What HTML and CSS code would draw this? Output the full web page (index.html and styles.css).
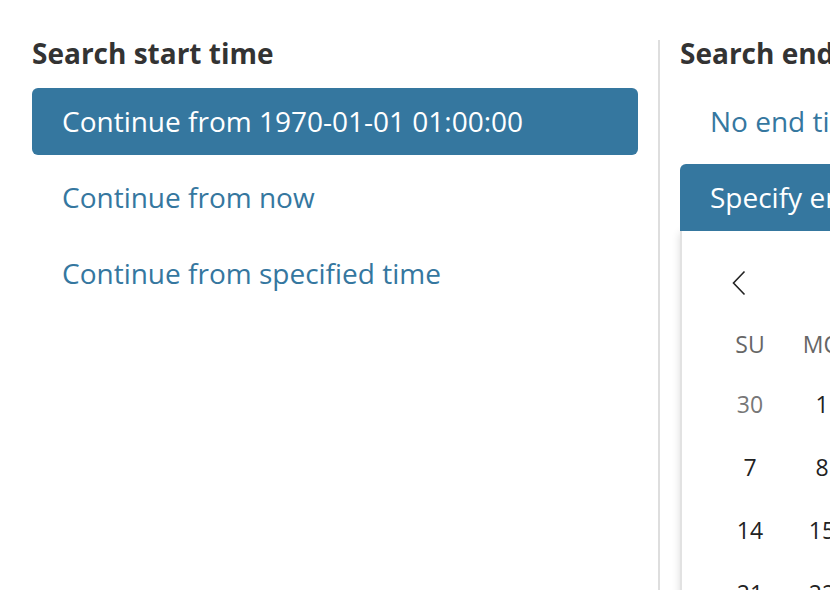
FILE: index.html
```html
<!DOCTYPE html>
<html>
<head>
<meta charset="utf-8">
<link rel="stylesheet" href="styles.css">
</head>
<body>
<div class="page">
  <section class="col">
    <h2 class="title">Search start time</h2>
    <ul class="options">
      <li class="opt active">Continue from 1970-01-01 01:00:00</li>
      <li class="opt">Continue from now</li>
      <li class="opt">Continue from specified time</li>
    </ul>
  </section>
  <div class="divider"></div>
  <section class="col">
    <h2 class="title">Search end time</h2>
    <ul class="options">
      <li class="opt">No end time</li>
      <li class="opt active panel-head">Specify end time</li>
    </ul>
    <div class="calendar">
      <div class="cal-nav">
        <svg class="chev" width="14" height="26" viewBox="0 0 14 26"><path d="M12.5 1.5 L1.5 13 L12.5 24.5" fill="none" stroke="#222" stroke-width="1.6"/></svg>
      </div>
      <div class="cal-grid">
        <span class="dow">SU</span><span class="dow">MO</span><span class="dow">TU</span><span class="dow">WE</span><span class="dow">TH</span><span class="dow">FR</span><span class="dow">SA</span>
        <span class="day muted">30</span><span class="day">1</span><span class="day">2</span><span class="day">3</span><span class="day">4</span><span class="day">5</span><span class="day">6</span>
        <span class="day">7</span><span class="day">8</span><span class="day">9</span><span class="day">10</span><span class="day">11</span><span class="day">12</span><span class="day">13</span>
        <span class="day">14</span><span class="day">15</span><span class="day">16</span><span class="day">17</span><span class="day">18</span><span class="day">19</span><span class="day">20</span>
        <span class="day">21</span><span class="day">22</span><span class="day">23</span><span class="day">24</span><span class="day">25</span><span class="day">26</span><span class="day">27</span>
      </div>
    </div>
  </section>
</div>
</body>
</html>
```

FILE: styles.css
```css
html, body {
  margin: 0;
  padding: 0;
  overflow: hidden;
  background: #fff;
}
body {
  font-family: "Open Sans", "Noto Sans", sans-serif;
  color: #333;
}
.page {
  display: flex;
  align-items: stretch;
  padding: 34px 0 0 32px;
  width: max-content;
  height: 600px;
  box-sizing: border-box;
}
.col {
  width: 606px;
  flex: none;
}
.divider {
  flex: none;
  width: 2px;
  background: #dedede;
  margin: 6px 20px 0 20px;
}
.title {
  margin: 0 0 16px 0;
  font-size: 28px;
  font-weight: 700;
  line-height: 38px;
  color: #333;
}
.options {
  list-style: none;
  margin: 0;
  padding: 0;
  display: flex;
  flex-direction: column;
  gap: 9px;
}
.opt {
  font-size: 28px;
  line-height: 43px;
  padding: 12px 30px;
  color: #35779f;
  border-radius: 6px;
  white-space: nowrap;
}
.opt.active {
  background: #35779f;
  color: #fff;
}
.opt.panel-head {
  border-radius: 6px 6px 0 0;
}
.calendar {
  border-left: 2px solid #e2e2e2;
  box-shadow: 0 2px 8px rgba(0, 0, 0, 0.15);
  background: #fff;
  padding: 20px 0 0 32px;
  height: 400px;
}
.cal-nav {
  height: 64px;
  display: flex;
  align-items: center;
  padding-left: 18px;
}
.chev {
  display: block;
}
.cal-grid {
  display: grid;
  grid-template-columns: repeat(7, 72px);
  grid-auto-rows: 63px;
  grid-template-rows: 57px;
}
.dow, .day {
  display: flex;
  align-items: center;
  justify-content: center;
  font-size: 23px;
}
.dow {
  color: #666;
}
.day {
  color: #222;
}
.day.muted {
  color: #777;
}
```
